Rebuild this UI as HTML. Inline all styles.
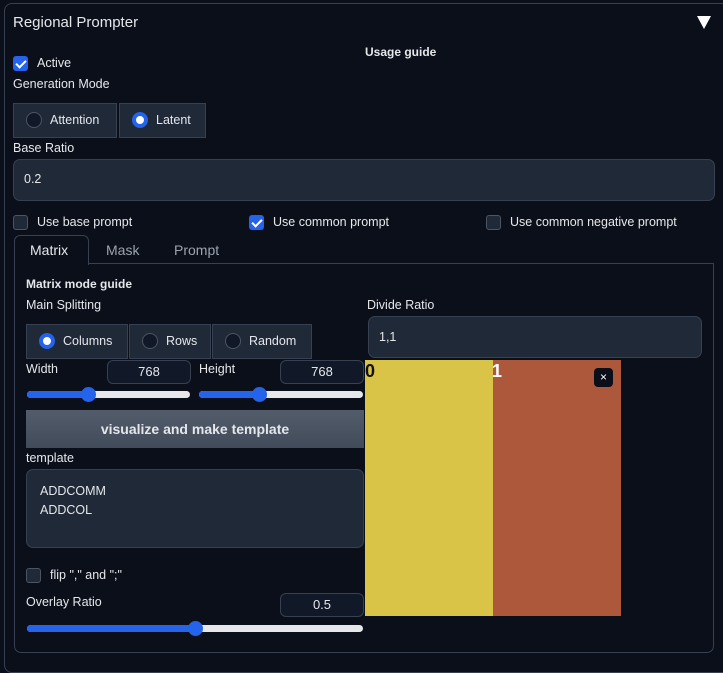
<!DOCTYPE html><html><head><style>
*{box-sizing:border-box;margin:0;padding:0}
body{width:723px;height:657px;background:#0b0f19;font-family:"Liberation Sans",sans-serif;color:#e5e7eb;font-size:12.5px;position:relative;overflow:hidden}
.a{position:absolute}
.box{position:absolute;border:1px solid #374151;border-radius:7px}
.inp{position:absolute;background:#1f2937;border:1px solid #374151;border-radius:7px}
.cb{position:absolute;width:15px;height:15px;border-radius:3px;background:#1f2937;border:1px solid #4b5563}
.cb.on{background:#2563eb;border-color:#2563eb}
.cb.on:after{content:"";position:absolute;left:4px;top:1px;width:4px;height:8px;border:solid #fff;border-width:0 2px 2px 0;transform:rotate(45deg)}
.rb{position:absolute;background:#1f2937;border:1px solid #374151}
.rd{position:absolute;width:16px;height:16px;border-radius:50%;border:1px solid #4b5563;background:#111827}
.rd.on{background:#fff;border:4px solid #2563eb}
.sl{position:absolute;height:7px;border-radius:4px;background:#e5e7eb}
.sl i{position:absolute;left:0;top:0;height:7px;border-radius:4px;background:#2563eb}
.sl b{position:absolute;top:-4px;width:15px;height:15px;border-radius:50%;background:#2563eb}
.num{position:absolute;height:24px;background:#111827;border:1px solid #374151;border-radius:6px;text-align:center;line-height:22px;font-size:13px}
</style></head><body>
<div class="box" style="left:4px;top:3px;width:730px;height:670px;border-radius:8px"></div>
<div class="a" style="left:13px;top:14px;font-size:15px;">Regional Prompter</div>
<div class="a" style="left:697px;top:16px;width:0;height:0;border-left:7px solid transparent;border-right:7px solid transparent;border-top:13px solid #fff"></div>
<div class="a" style="left:365px;top:45px;font-weight:bold;font-size:12px">Usage guide</div>
<div class="cb on" style="left:13px;top:56px"></div><div class="a" style="left:37px;top:56px">Active</div>
<div class="a" style="left:13px;top:77px">Generation Mode</div>
<div class="rb" style="left:13px;top:103px;width:104px;height:35px"></div>
<div class="rb" style="left:119px;top:103px;width:87px;height:35px"></div>
<div class="rd" style="left:26px;top:112px"></div><div class="a" style="left:50px;top:113px">Attention</div>
<div class="rd on" style="left:132px;top:112px"></div><div class="a" style="left:156px;top:113px">Latent</div>
<div class="a" style="left:13px;top:141px">Base Ratio</div>
<div class="inp" style="left:13px;top:159px;width:702px;height:42px"></div>
<div class="a" style="left:24px;top:172px">0.2</div>
<div class="cb" style="left:13px;top:215px"></div><div class="a" style="left:37px;top:215px">Use base prompt</div>
<div class="cb on" style="left:249px;top:215px"></div><div class="a" style="left:273px;top:215px">Use common prompt</div>
<div class="cb" style="left:486px;top:215px"></div><div class="a" style="left:510px;top:215px">Use common negative prompt</div>
<div class="box" style="left:14px;top:263px;width:700px;height:390px;border-radius:0 0 7px 7px"></div>
<div class="a" style="left:14px;top:235px;width:75px;height:30px;border:1px solid #374151;border-bottom:none;border-radius:6px 6px 0 0;background:#0b0f19"></div>
<div class="a" style="left:30px;top:242px;font-size:14px">Matrix</div>
<div class="a" style="left:106px;top:242px;font-size:14px;color:#9ca3af">Mask</div>
<div class="a" style="left:174px;top:242px;font-size:14px;color:#9ca3af">Prompt</div>
<div class="a" style="left:26px;top:277px;font-weight:bold;font-size:12px">Matrix mode guide</div>
<div class="a" style="left:26px;top:298px">Main Splitting</div>
<div class="rb" style="left:26px;top:324px;width:102px;height:35px"></div>
<div class="rb" style="left:129px;top:324px;width:82px;height:35px"></div>
<div class="rb" style="left:212px;top:324px;width:100px;height:35px"></div>
<div class="rd on" style="left:39px;top:333px"></div><div class="a" style="left:63px;top:334px">Columns</div>
<div class="rd" style="left:142px;top:333px"></div><div class="a" style="left:166px;top:334px">Rows</div>
<div class="rd" style="left:225px;top:333px"></div><div class="a" style="left:249px;top:334px">Random</div>
<div class="a" style="left:26px;top:362px">Width</div>
<div class="num" style="left:107px;top:360px;width:84px">768</div>
<div class="a" style="left:199px;top:362px">Height</div>
<div class="num" style="left:280px;top:360px;width:84px">768</div>
<div class="sl" style="left:27px;top:391px;width:163px"><i style="width:60px"></i><b style="left:54px"></b></div>
<div class="sl" style="left:199px;top:391px;width:164px"><i style="width:60px"></i><b style="left:53px"></b></div>
<div class="a" style="left:26px;top:410px;width:338px;height:38px;background:linear-gradient(#525c6b,#414b5a);text-align:center;line-height:38px;font-weight:bold;font-size:14px">visualize and make template</div>
<div class="a" style="left:26px;top:451px">template</div>
<div class="inp" style="left:26px;top:469px;width:338px;height:79px"></div>
<div class="a" style="left:40px;top:482px;line-height:19px">ADDCOMM<br>ADDCOL</div>
<div class="cb" style="left:26px;top:568px"></div><div class="a" style="left:50px;top:568px">flip "," and ";"</div>
<div class="a" style="left:26px;top:595px">Overlay Ratio</div>
<div class="num" style="left:280px;top:593px;width:84px">0.5</div>
<div class="sl" style="left:27px;top:625px;width:336px"><i style="width:168px"></i><b style="left:161px"></b></div>
<div class="a" style="left:367px;top:298px">Divide Ratio</div>
<div class="inp" style="left:368px;top:316px;width:334px;height:42px"></div>
<div class="a" style="left:379px;top:330px">1,1</div>
<div class="a" style="left:365px;top:360px;width:128px;height:256px;background:#d9c447"></div>
<div class="a" style="left:493px;top:360px;width:128px;height:256px;background:#ad583b"></div>
<div class="a" style="left:365px;top:360px;font-weight:bold;font-size:18px;color:#111;line-height:22px">0</div>
<div class="a" style="left:492px;top:360px;font-weight:bold;font-size:18px;color:#fff;line-height:22px">1</div>
<div class="a" style="left:594px;top:368px;width:19px;height:19px;border-radius:4px;background:#0b0f19;color:#fff;text-align:center;line-height:19px;font-size:12px">×</div>
</body></html>
